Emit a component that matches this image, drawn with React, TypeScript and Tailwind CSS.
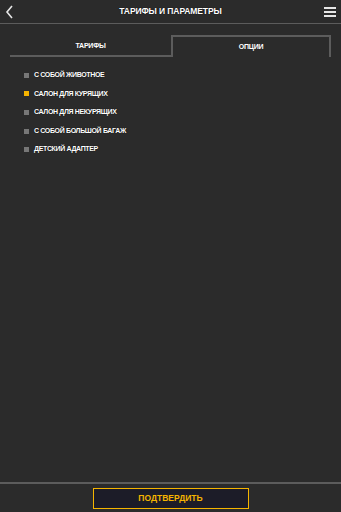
import React from "react";

const options = [
  { label: "С СОБОЙ ЖИВОТНОЕ", active: false },
  { label: "САЛОН ДЛЯ КУРЯЩИХ", active: true },
  { label: "САЛОН ДЛЯ НЕКУРЯЩИХ", active: false },
  { label: "С СОБОЙ БОЛЬШОЙ БАГАЖ", active: false },
  { label: "ДЕТСКИЙ АДАПТЕР", active: false },
];

const App = () => {
  return (
    <div className="flex flex-col w-[341px] h-[512px] bg-[#2b2b2b] text-white font-['Liberation_Sans',sans-serif] overflow-hidden">
      <div className="relative flex items-center justify-center h-6 border-b border-[#5c5c5c]">
        <svg className="absolute left-[5px] top-[5px]" width="9" height="14" viewBox="0 0 9 14">
          <path d="M7 1 L2 7 L7 13" fill="none" stroke="#e6e6e6" strokeWidth="1.6" />
        </svg>
        <p className="text-[8.5px] font-bold tracking-[-0.1px] [text-shadow:0_0_1px_#000]">ТАРИФЫ И ПАРАМЕТРЫ</p>
        <div className="absolute right-[5px] top-[7px] flex flex-col gap-[2px]">
          <span className="block w-[12px] h-[2px] bg-[#e6e6e6]" />
          <span className="block w-[12px] h-[2px] bg-[#e6e6e6]" />
          <span className="block w-[12px] h-[2px] bg-[#e6e6e6]" />
        </div>
      </div>

      <div className="flex mt-[11px] ml-[10px] mr-[10px] h-[22px]">
        <div className="flex w-[161px] items-center justify-center border-b-2 border-[#5c5c5c] pt-[2px]">
          <p className="text-[7px] font-bold tracking-[-0.2px]">ТАРИФЫ</p>
        </div>
        <div className="flex flex-1 items-center justify-center border-t-2 border-x-2 border-[#5c5c5c]">
          <p className="text-[7px] font-bold tracking-[-0.2px]">ОПЦИИ</p>
        </div>
      </div>

      <ul className="flex flex-col mt-[9px] pl-[24px]">
        {options.map((o) => (
          <li key={o.label} className="flex items-center h-[18.6px] gap-[5px]">
            <span className={`block w-[5px] h-[5px] ${o.active ? "bg-[#f5b400]" : "bg-[#777777]"}`} />
            <span className="text-[7px] font-bold tracking-[-0.35px] [text-shadow:0_0_1px_#000]">{o.label}</span>
          </li>
        ))}
      </ul>

      <div className="flex-1" />

      <div className="flex justify-center pt-[4px] pb-[3px] border-t-2 border-[#5c5c5c]">
        <button className="flex items-center justify-center w-[156px] h-[21px] border border-[#f5b400] bg-[#1c1c28]">
          <span className="text-[8.5px] font-bold text-[#f5b400]">ПОДТВЕРДИТЬ</span>
        </button>
      </div>
    </div>
  );
};

export default App;
